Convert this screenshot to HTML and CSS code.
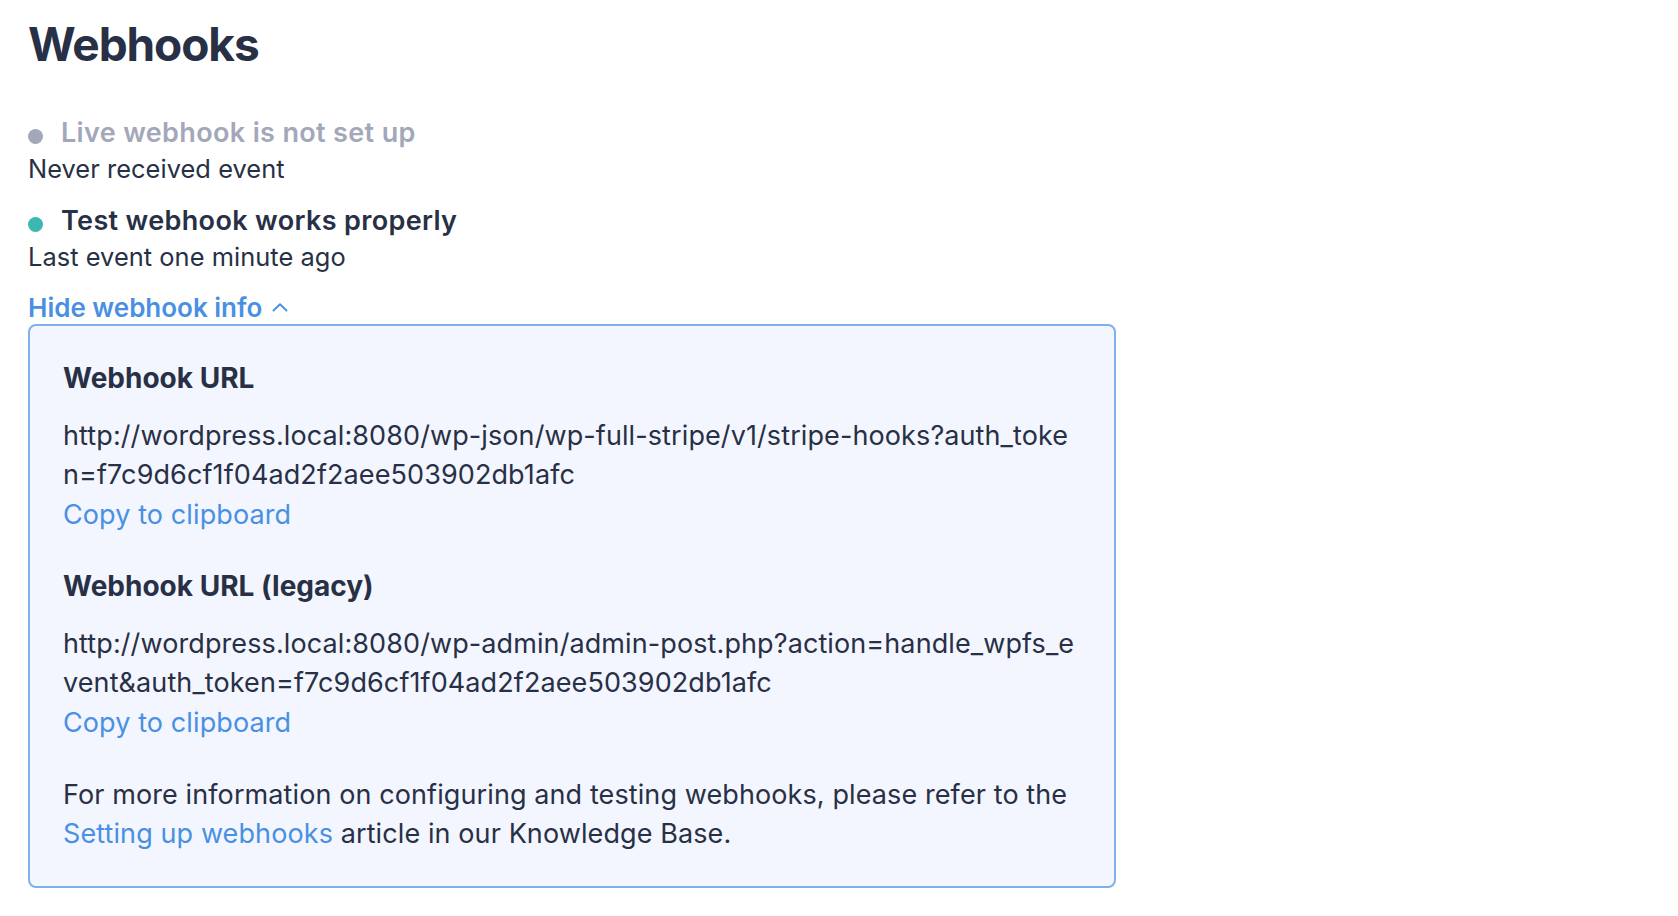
FILE: index.html
```html
<!DOCTYPE html>
<html lang="en">
<head>
<meta charset="utf-8">
<title>Webhooks</title>
<link rel="stylesheet" href="styles.css">
</head>
<body>
<main class="page">
  <h1 class="title">Webhooks</h1>

  <section class="status">
    <div class="status-head status-head--off">
      <span class="dot dot--off"></span>
      <span>Live webhook is not set up</span>
    </div>
    <div class="status-sub">Never received event</div>
  </section>

  <section class="status">
    <div class="status-head status-head--ok">
      <span class="dot dot--ok"></span>
      <span>Test webhook works properly</span>
    </div>
    <div class="status-sub">Last event one minute ago</div>
  </section>

  <a class="toggle" href="#">Hide webhook info
    <svg class="chevron" width="16" height="10" viewBox="0 0 16 10" aria-hidden="true"><path d="M1.5 8.5 L8 2.2 L14.5 8.5" fill="none" stroke="currentColor" stroke-width="1.9" stroke-linecap="round" stroke-linejoin="round"/></svg>
  </a>

  <div class="info">
    <div class="info-block">
      <h2 class="info-title">Webhook URL</h2>
      <div class="url">http://wordpress.local:8080/wp-json/wp-full-stripe/v1/stripe-hooks?auth_token=f7c9d6cf1f04ad2f2aee503902db1afc</div>
      <a class="link" href="#">Copy to clipboard</a>
    </div>
    <div class="info-block">
      <h2 class="info-title">Webhook URL (legacy)</h2>
      <div class="url">http://wordpress.local:8080/wp-admin/admin-post.php?action=handle_wpfs_event&amp;auth_token=f7c9d6cf1f04ad2f2aee503902db1afc</div>
      <a class="link" href="#">Copy to clipboard</a>
    </div>
    <p class="info-note">For more information on configuring and testing webhooks, please refer to the <a class="link" href="#">Setting up webhooks</a> article in our Knowledge Base.</p>
  </div>
</main>
</body>
</html>
```

FILE: styles.css
```css
html, body {
  margin: 0;
  padding: 0;
  background: #ffffff;
}

body {
  font-family: "Inter", "Noto Sans", "Liberation Sans", sans-serif;
  color: #283046;
  font-size: 26px;
}

.page {
  padding: 17px 0 0 28px;
  display: flex;
  flex-direction: column;
  align-items: flex-start;
}

.title {
  margin: 0;
  font-size: 46px;
  line-height: 55px;
  font-weight: 700;
  letter-spacing: -1.1px;
  color: #283046;
}

.status {
  display: flex;
  flex-direction: column;
}

.status + .status {
  margin-top: 16px;
}

.title + .status {
  margin-top: 43px;
}

.status-head {
  display: flex;
  align-items: center;
  gap: 18px;
  font-size: 27px;
  line-height: 36px;
  font-weight: 600;
  letter-spacing: 0.35px;
}

.status-head--off { color: #a2a8b9; }
.status-head--ok { color: #283046; }

.dot {
  width: 15px;
  height: 15px;
  border-radius: 50%;
  margin-top: 7px;
  flex: none;
}

.dot--off { background: #a2a8b9; }
.dot--ok { background: #3cb8b3; }

.status-sub {
  font-size: 25.4px;
  line-height: 36px;
  letter-spacing: 0.05px;
}

.toggle {
  margin-top: 18px;
  display: flex;
  align-items: center;
  gap: 10px;
  font-size: 26px;
  line-height: 30px;
  font-weight: 600;
  color: #4a90e2;
  text-decoration: none;
}

.chevron {
  margin-top: -2px;
}

.info {
  margin-top: 1px;
  width: 1088px;
  box-sizing: border-box;
  border: 2px solid #80b0ec;
  border-radius: 8px;
  background: #f3f6fe;
  padding: 33px 34px 32px 33px;
  font-size: 27px;
  line-height: 39.7px;
  letter-spacing: 0.1px;
}

.info-block {
  margin-bottom: 32px;
}

.info-title {
  margin: 0 0 17px;
  font-size: 28px;
  line-height: 39.7px;
  font-weight: 700;
  letter-spacing: 0;
  color: #283046;
}

.url {
  word-break: break-all;
}

.link {
  color: #4a90e2;
  text-decoration: none;
}

.info-block > .link {
  display: block;
}

.info-note {
  margin: 0;
}
```
